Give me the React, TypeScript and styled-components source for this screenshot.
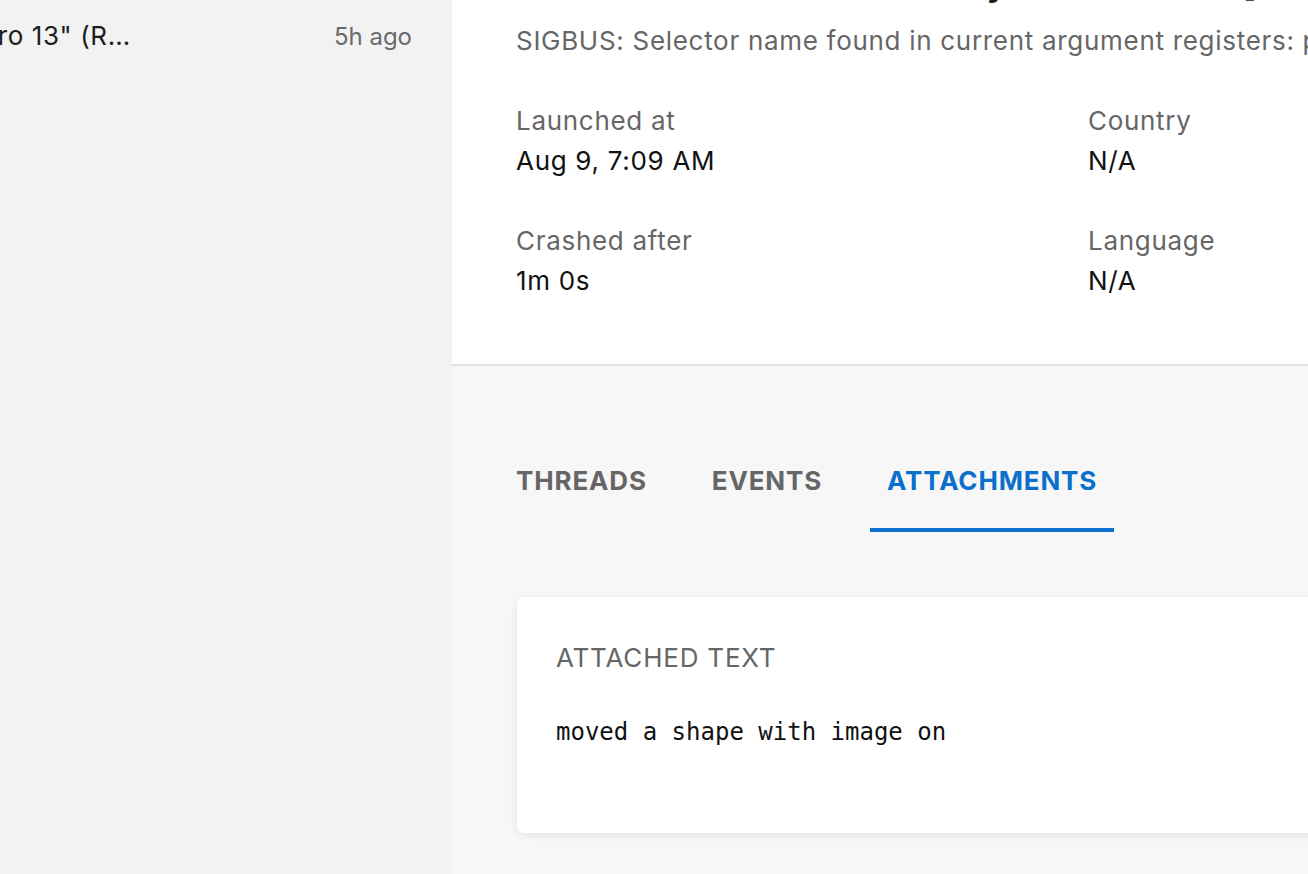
import styled, { createGlobalStyle } from "styled-components";

const SCROLL_X = 180;
const SCROLL_Y = 36;

const GlobalStyle = createGlobalStyle`
  html, body {
    margin: 0;
    padding: 0;
    overflow: hidden;
    background: #f7f7f7;
  }
  body {
    font-family: Inter, "Noto Sans", sans-serif;
    -webkit-font-smoothing: antialiased;
  }
`;

type Fact = { label: string; value: string };

const facts: Fact[] = [
  { label: "Launched at", value: "Aug 9, 7:09 AM" },
  { label: "Country", value: "N/A" },
  { label: "Crashed after", value: "1m 0s" },
  { label: "Language", value: "N/A" },
];

const tabs = ["Threads", "Events", "Attachments"];

const App = () => (
  <>
    <GlobalStyle />
    <Frame>
      <Sidebar>
        <CrashRow>
          <DeviceName>MacBook Pro 13" (R…</DeviceName>
          <Age>5h ago</Age>
        </CrashRow>
      </Sidebar>
      <Detail>
        <Header>
          <Title>-[SCNRenderer _drawOverlaySceneAtPoint:]</Title>
          <Reason>
            SIGBUS: Selector name found in current argument registers: performSelector:withObject:
          </Reason>
          <FactGrid>
            {facts.map((f) => (
              <div key={f.label}>
                <FactLabel>{f.label}</FactLabel>
                <FactValue>{f.value}</FactValue>
              </div>
            ))}
          </FactGrid>
        </Header>
        <Lower>
          <TabList>
            {tabs.map((t) => (
              <Tab key={t} $active={t === "Attachments"}>
                {t}
              </Tab>
            ))}
          </TabList>
          <Card>
            <CardTitle>Attached Text</CardTitle>
            <Attachment>moved a shape with image on</Attachment>
          </Card>
        </Lower>
      </Detail>
    </Frame>
  </>
);

export default App;

const Frame = styled.div`
  display: flex;
  margin-left: -${SCROLL_X}px;
  margin-top: -${SCROLL_Y}px;
  min-height: calc(100vh + ${SCROLL_Y}px);
`;

const Sidebar = styled.aside`
  flex: 0 0 ${452 + SCROLL_X}px;
  background: #f2f2f2;
  padding-top: 56px;
  box-sizing: border-box;
`;

const CrashRow = styled.div`
  display: flex;
  align-items: baseline;
  justify-content: space-between;
  padding: 0 40px 0 33px;
`;

const DeviceName = styled.span`
  font-size: 26px;
  line-height: 32px;
  letter-spacing: 0.6px;
  color: #1c1c1c;
  white-space: nowrap;
`;

const Age = styled.span`
  font-size: 24px;
  line-height: 32px;
  color: #6a6a6a;
`;

const Detail = styled.main`
  flex: 0 0 1300px;
  display: flex;
  flex-direction: column;
  background: #f7f7f7;
`;

const Header = styled.section`
  background: #fff;
  padding: 0 64px 63px;
  border-bottom: 2px solid #e2e2e2;
`;

const Title = styled.h1`
  margin: 0;
  font-size: 34px;
  line-height: 40px;
  font-weight: 700;
  color: #1a1a1a;
  white-space: nowrap;
`;

const Reason = styled.p`
  margin: 21px 0 0;
  font-size: 26px;
  line-height: 32px;
  letter-spacing: 0.7px;
  color: #666;
  white-space: nowrap;
`;

const FactGrid = styled.div`
  display: grid;
  grid-template-columns: 572px 1fr;
  row-gap: 40px;
  margin-top: 44px;
`;

const FactLabel = styled.div`
  font-size: 26px;
  line-height: 40px;
  letter-spacing: 0.7px;
  color: #666;
`;

const FactValue = styled.div`
  font-size: 26px;
  line-height: 40px;
  letter-spacing: 0.7px;
  color: #111;
`;

const Lower = styled.section`
  flex: 1;
  padding: 99px 64px 0;
`;

const TabList = styled.nav`
  display: flex;
  gap: 31px;
  margin-left: -17px;
`;

const Tab = styled.div<{ $active?: boolean }>`
  padding: 0 17px 31px;
  font-size: 26px;
  line-height: 32px;
  font-weight: 700;
  letter-spacing: 0.85px;
  text-transform: uppercase;
  color: ${(p) => (p.$active ? "#0b6fcc" : "#666")};
  border-bottom: 4px solid ${(p) => (p.$active ? "#0b6fcc" : "transparent")};
`;

const Card = styled.div`
  margin-top: 65px;
  margin-left: 1px;
  background: #fff;
  border-radius: 6px;
  box-shadow: 0 2px 8px rgba(0, 0, 0, 0.08), 0 0 1px rgba(0, 0, 0, 0.1);
  padding: 45px 39px 85px;
`;

const CardTitle = styled.h2`
  margin: 0;
  font-size: 26px;
  line-height: 32px;
  font-weight: 400;
  letter-spacing: 0.8px;
  text-transform: uppercase;
  color: #666;
`;

const Attachment = styled.pre`
  margin: 42px 0 0;
  font-family: "DejaVu Sans Mono", "Liberation Mono", monospace;
  font-size: 24px;
  line-height: 32px;
  color: #111;
`;
